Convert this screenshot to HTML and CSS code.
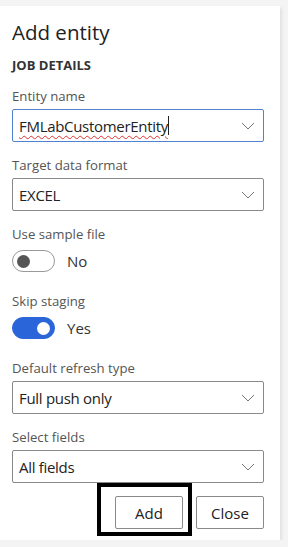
FILE: index.html
```html
<!DOCTYPE html>
<html lang="en">
<head>
  <meta charset="UTF-8">
  <meta name="viewport" content="width=device-width, initial-scale=1.0">
  <title>Add entity</title>
  <link rel="stylesheet" href="styles.css">
</head>
<body>
  <div class="panel">
    <h1 class="titulo">Add entity</h1>
    <h2 class="seccion">JOB DETAILS</h2>

    <label class="etiqueta">Entity name</label>
    <div class="campo activo">
      <span class="valor"><span class="error">FMLabCustomerEntity</span><span class="cursor"></span></span>
      <svg class="flecha" width="14" height="8" viewBox="0 0 14 8"><path d="M1 1 L7 7 L13 1" fill="none" stroke="#777" stroke-width="1"/></svg>
    </div>

    <label class="etiqueta">Target data format</label>
    <div class="campo">
      <span class="valor">EXCEL</span>
      <svg class="flecha" width="14" height="8" viewBox="0 0 14 8"><path d="M1 1 L7 7 L13 1" fill="none" stroke="#777" stroke-width="1"/></svg>
    </div>

    <label class="etiqueta">Use sample file</label>
    <div class="interruptor">
      <span class="toggle"><span class="bola"></span></span>
      <span class="estado">No</span>
    </div>

    <label class="etiqueta">Skip staging</label>
    <div class="interruptor">
      <span class="toggle on"><span class="bola"></span></span>
      <span class="estado">Yes</span>
    </div>

    <label class="etiqueta">Default refresh type</label>
    <div class="campo">
      <span class="valor">Full push only</span>
      <svg class="flecha" width="14" height="8" viewBox="0 0 14 8"><path d="M1 1 L7 7 L13 1" fill="none" stroke="#777" stroke-width="1"/></svg>
    </div>

    <label class="etiqueta">Select fields</label>
    <div class="campo">
      <span class="valor">All fields</span>
      <svg class="flecha" width="14" height="8" viewBox="0 0 14 8"><path d="M1 1 L7 7 L13 1" fill="none" stroke="#777" stroke-width="1"/></svg>
    </div>

    <div class="botones">
      <div class="marca">
        <button type="button" class="boton">Add</button>
      </div>
      <button type="button" class="boton">Close</button>
    </div>
  </div>
</body>
</html>
```

FILE: styles.css
```css
body {
  margin: 0;
  font-family: "Open Sans", "Noto Sans", Arial, sans-serif;
  background: #f4f4f4;
}

.panel {
  width: 280px;
  height: 534px;
  margin-top: 6px;
  padding: 0 16px 0 12px;
  box-sizing: border-box;
  background: #fff;
  display: flex;
  flex-direction: column;
  box-shadow: 2px 2px 3px rgba(0, 0, 0, 0.08);
}

.titulo {
  margin: 13px 0 0 0;
  font-size: 20.5px;
  font-weight: normal;
  color: #222;
  line-height: 26px;
}

.seccion {
  margin: 12px 0 0 0;
  font-size: 13px;
  font-weight: bold;
  color: #333;
  line-height: 16px;
}

.etiqueta {
  font-size: 13.2px;
  color: #555;
  line-height: 16px;
  margin-top: 15px;
}

.seccion + .etiqueta {
  margin-top: 15px;
}

.interruptor + .etiqueta {
  margin-top: 21px;
}

.campo {
  margin-top: 5px;
  height: 33px;
  border: 1px solid #8a8a8a;
  border-radius: 2px;
  box-sizing: border-box;
  display: flex;
  align-items: center;
  justify-content: space-between;
  padding: 0 8px 0 6px;
}

.campo.activo {
  border-color: #4f83d1;
}

.valor {
  font-size: 15px;
  color: #222;
  display: flex;
  align-items: center;
  letter-spacing: -0.3px;
}

.error {
  text-decoration: underline wavy #e03030;
  text-decoration-thickness: 1px;
  text-underline-offset: 3px;
}

.cursor {
  width: 1px;
  height: 19px;
  background: #222;
}

.interruptor {
  margin-top: 8px;
  display: flex;
  align-items: center;
  gap: 12px;
}

.toggle {
  width: 43px;
  height: 22px;
  border: 1px solid #999;
  border-radius: 11px;
  box-sizing: border-box;
  display: flex;
  align-items: center;
  padding: 0 4px;
}

.toggle .bola {
  width: 13px;
  height: 13px;
  border-radius: 50%;
  background: #555;
}

.toggle.on {
  background: #2a66d9;
  border-color: #2a66d9;
  justify-content: flex-end;
}

.toggle.on .bola {
  background: #fff;
}

.estado {
  font-size: 15px;
  color: #333;
}

.botones {
  display: flex;
  justify-content: flex-end;
  align-items: flex-start;
  gap: 4px;
}

.marca {
  border: 4px solid #000;
  padding: 9px 5px 3px 14px;
}

.boton {
  width: 68px;
  height: 33px;
  background: #fff;
  border: 1px solid #8a8a8a;
  border-radius: 2px;
  font-family: inherit;
  font-size: 15px;
  color: #222;
  margin-top: 13px;
}

.marca .boton {
  margin-top: 0;
}
```
